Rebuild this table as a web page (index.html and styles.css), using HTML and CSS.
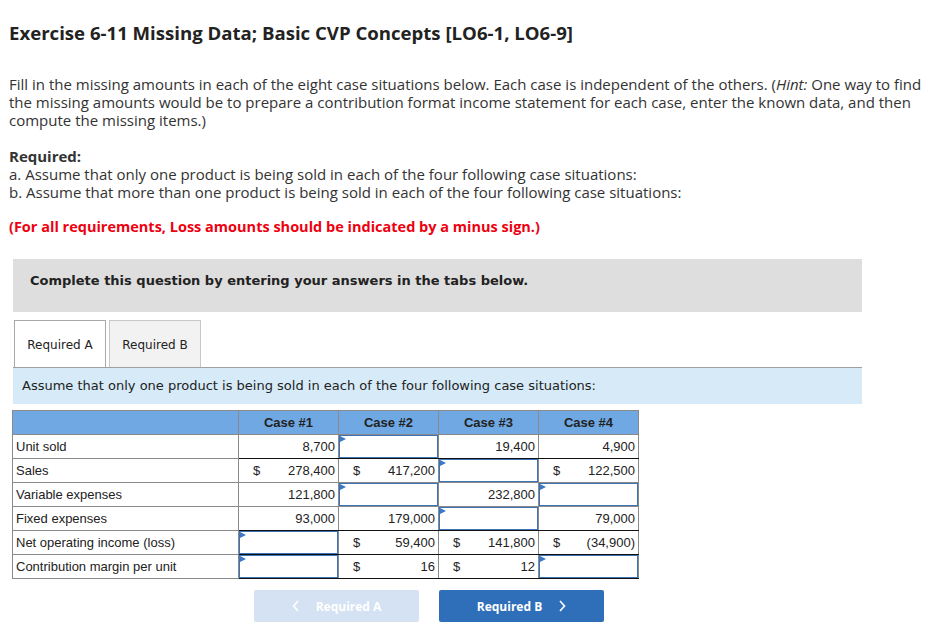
FILE: index.html
```html
<!DOCTYPE html>
<html>
<head>
<meta charset="utf-8">
<link rel="stylesheet" href="styles.css">
</head>
<body>
<div class="page">
  <h1 class="title">Exercise 6-11 Missing Data; Basic CVP Concepts [LO6-1, LO6-9]</h1>
  <p class="intro">Fill in the missing amounts in each of the eight case situations below. Each case is independent of the others. (<i>Hint:</i> One way to find the missing amounts would be to prepare a contribution format income statement for each case, enter the known data, and then compute the missing items.)</p>
  <p class="req"><b>Required:</b><br>a. Assume that only one product is being sold in each of the four following case situations:<br>b. Assume that more than one product is being sold in each of the four following case situations:</p>
  <p class="warn">(For all requirements, Loss amounts should be indicated by a minus sign.)</p>

  <div class="notice">Complete this question by entering your answers in the tabs below.</div>

  <div class="tabs">
    <div class="tab active">Required A</div>
    <div class="tab">Required B</div>
  </div>
  <div class="prompt">Assume that only one product is being sold in each of the four following case situations:</div>

  <table class="grid">
    <colgroup><col class="c-label"><col class="c-val"><col class="c-val"><col class="c-val"><col class="c-val"></colgroup>
    <thead>
      <tr><th></th><th>Case #1</th><th>Case #2</th><th>Case #3</th><th>Case #4</th></tr>
    </thead>
    <tbody>
      <tr class="dk">
        <td class="lbl">Unit sold</td>
        <td><div class="v"><span></span><span>8,700</span></div></td>
        <td class="in"><div class="box"></div><i class="tri"></i></td>
        <td><div class="v"><span></span><span>19,400</span></div></td>
        <td><div class="v"><span></span><span>4,900</span></div></td>
      </tr>
      <tr>
        <td class="lbl">Sales</td>
        <td><div class="v"><span>$</span><span>278,400</span></div></td>
        <td><div class="v"><span>$</span><span>417,200</span></div></td>
        <td class="in"><div class="box"></div><i class="tri"></i></td>
        <td><div class="v"><span>$</span><span>122,500</span></div></td>
      </tr>
      <tr>
        <td class="lbl">Variable expenses</td>
        <td><div class="v"><span></span><span>121,800</span></div></td>
        <td class="in"><div class="box"></div><i class="tri"></i></td>
        <td><div class="v"><span></span><span>232,800</span></div></td>
        <td class="in"><div class="box"></div><i class="tri"></i></td>
      </tr>
      <tr class="dk">
        <td class="lbl">Fixed expenses</td>
        <td><div class="v"><span></span><span>93,000</span></div></td>
        <td><div class="v"><span></span><span>179,000</span></div></td>
        <td class="in"><div class="box"></div><i class="tri"></i></td>
        <td><div class="v"><span></span><span>79,000</span></div></td>
      </tr>
      <tr class="dk">
        <td class="lbl">Net operating income (loss)</td>
        <td class="in"><div class="box"></div><i class="tri"></i></td>
        <td><div class="v"><span>$</span><span>59,400</span></div></td>
        <td><div class="v"><span>$</span><span>141,800</span></div></td>
        <td><div class="v"><span>$</span><span>(34,900)</span></div></td>
      </tr>
      <tr class="dk">
        <td class="lbl">Contribution margin per unit</td>
        <td class="in"><div class="box"></div><i class="tri"></i></td>
        <td><div class="v"><span>$</span><span>16</span></div></td>
        <td><div class="v"><span>$</span><span>12</span></div></td>
        <td class="in"><div class="box"></div><i class="tri"></i></td>
      </tr>
    </tbody>
  </table>

  <div class="nav">
    <button class="btn prev"><svg class="chev" width="7" height="12" viewBox="0 0 7 12"><path d="M6 1 L1.5 6 L6 11" fill="none" stroke="#fff" stroke-width="1.6"/></svg>Required A</button>
    <button class="btn next">Required B<svg class="chev" width="7" height="12" viewBox="0 0 7 12"><path d="M1 1 L5.5 6 L1 11" fill="none" stroke="#fff" stroke-width="1.6"/></svg></button>
  </div>
</div>
</body>
</html>
```

FILE: styles.css
```css
html, body { margin: 0; padding: 0; background: #fff; }
.page {
  padding: 22px 0 0 0;
  font-family: "Open Sans", "Lato", sans-serif;
  color: #333;
}
.title {
  margin: 0 0 0 9px;
  font-size: 18.6px;
  line-height: 22px;
  font-weight: 700;
  color: #222;
}
.intro, .req {
  margin: 0 0 0 9px;
  font-size: 15px;
  line-height: 18px;
  color: #333;
  width: 922px;
}
.intro { margin-top: 31px; }
.req { margin-top: 18px; }
.warn {
  margin: 17px 0 0 9px;
  font-size: 14.5px;
  line-height: 18px;
  font-weight: 700;
  color: #ee0010;
}
.notice {
  margin: 23px 0 0 13px;
  width: 849px;
  height: 53px;
  box-sizing: border-box;
  padding: 14px 0 0 17px;
  background: #dedede;
  font-family: "DejaVu Sans", Verdana, sans-serif;
  font-weight: 700;
  font-size: 13px;
  color: #222;
}
.tabs {
  margin: 8px 0 0 14px;
  display: flex;
  gap: 3px;
  height: 47px;
}
.tab {
  width: 92px;
  box-sizing: border-box;
  display: flex;
  align-items: center;
  justify-content: center;
  padding-top: 2px;
  font-family: "DejaVu Sans", Verdana, sans-serif;
  font-size: 12px;
  color: #222;
  border: 1px solid #c8c8c8;
  border-bottom: none;
  background: #f2f2f2;
}
.tab.active { background: #fff; border-color: #a9a9a9; }
.prompt {
  margin: 0 0 0 13px;
  width: 849px;
  height: 37px;
  box-sizing: border-box;
  border-top: 1px solid #a0a0a0;
  background: #d6eaf8;
  padding: 10px 0 0 9px;
  font-family: "DejaVu Sans", Verdana, sans-serif;
  font-size: 13px;
  color: #222;
}
.grid {
  margin: 6px 0 0 12px;
  border-collapse: collapse;
  table-layout: fixed;
  width: 627px;
  font-family: "Liberation Sans", Arial, sans-serif;
  font-size: 13px;
  color: #222;
}
.c-label { width: 226px; }
.c-val { width: 100px; }
.grid th, .grid td {
  border: 1px solid #8a8a8a;
  height: 24px;
  padding: 0;
  box-sizing: border-box;
}
.grid th {
  background: #6fa8e2;
  font-weight: 700;
  font-size: 13px;
  text-align: center;
}
.grid td.lbl { padding-left: 3px; }
.grid tbody tr.dk td:not(.lbl) { border-bottom-color: #111; }
.v {
  display: flex;
  justify-content: space-between;
  padding: 0 3px 0 14px;
}
.grid td.in { position: relative; }
.box {
  height: 23px;
  box-sizing: border-box;
  border: 1.5px solid #3b72b8;
  margin: 0;
}
.tri {
  position: absolute;
  left: 1px;
  top: 1px;
  width: 0;
  height: 0;
  border-top: 3px solid transparent;
  border-bottom: 3px solid transparent;
  border-left: 6px solid #3b78c8;
}
.nav {
  margin: 11px 0 0 254px;
  display: flex;
  gap: 20px;
}
.btn {
  width: 165px;
  height: 32px;
  border: none;
  border-radius: 2px;
  font-family: "Open Sans", "Lato", sans-serif;
  font-size: 12px;
  font-weight: 700;
  color: #fff;
  display: flex;
  align-items: center;
  justify-content: center;
  gap: 17px;
  padding: 0;
}
.btn.prev { background: #d4e2f3; }
.btn.next { background: #2f6fba; }
.chev { display: block; }
```
